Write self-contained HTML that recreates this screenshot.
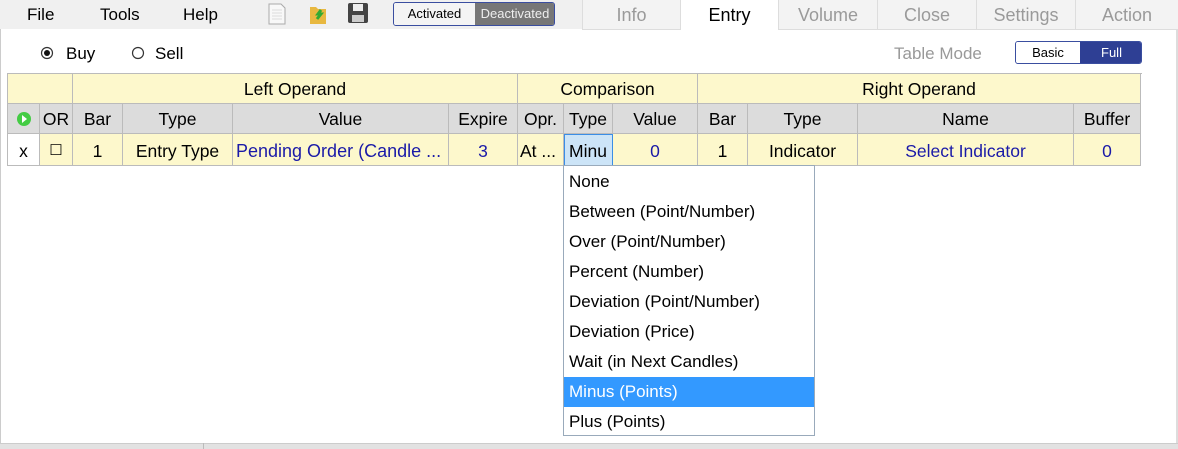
<!DOCTYPE html>
<html><head><meta charset="utf-8"><style>
*{box-sizing:border-box;margin:0;padding:0}
body{width:1178px;height:449px;overflow:hidden;background:#fff;font-family:"Liberation Sans",sans-serif;font-size:17px;color:#000;position:relative}
.a{position:absolute}
.menu{left:0;top:0;width:582px;height:29px;background:#f0f0f0}
.menu span{position:absolute;top:5px;font-size:17px}
.tab{position:absolute;top:0;height:30px;background:#f3f3f3;border-left:1px solid #ddd;border-bottom:1px solid #ddd;color:#9a9a9a;text-align:center;line-height:30px;font-size:18px}
.c{position:absolute;border-right:1px solid #bbb;border-bottom:1px solid #bbb;text-align:center;white-space:nowrap;overflow:hidden;line-height:30px;font-size:17.5px}
.y{background:#fdf8cc}.g{background:#dcdcdc}
.bl{color:#1a1aa8}
.dd div{height:30px;line-height:30px;padding-left:5px}
</style></head><body>
<div class="a menu">
<span style="left:27px">File</span><span style="left:100px">Tools</span><span style="left:183px">Help</span>
<svg class="a" style="left:267px;top:3px" width="20" height="22"><path d="M2 1h12l4 4v16H2z" fill="#f8f8f8" stroke="#aaa"/><path d="M5 7h10M5 10h10M5 13h10M5 16h10" stroke="#ddd"/></svg>
<svg class="a" style="left:308px;top:3px" width="20" height="22"><path d="M2 4h6l2 2h8v15H2z" fill="#e8b840"/><path d="M9 16l4-5h-3l3-4" stroke="#3a3" stroke-width="3" fill="none"/></svg>
<svg class="a" style="left:347px;top:2px" width="22" height="22"><rect x="1" y="1" width="20" height="20" rx="2" fill="#444"/><rect x="6" y="2" width="10" height="7" fill="#eee"/><rect x="5" y="13" width="12" height="7" fill="#ccc"/></svg>
<div class="a" style="left:393px;top:2px;width:162px;height:24px;border:1px solid #3a4ea0;border-radius:3px;overflow:hidden;font-size:13px;line-height:22px">
<span style="position:absolute;left:0;top:0;width:81px;height:22px;background:#f4f4f4;text-align:center;font-size:13px">Activated</span>
<span style="position:absolute;left:81px;top:0;width:80px;height:22px;background:#777;color:#eee;text-align:center;font-size:13px">Deactivated</span></div>
</div>
<div class="tab" style="left:582px;width:98px">Info</div>
<div class="tab" style="left:680px;width:98px;background:#fff;color:#000;border-bottom:none">Entry</div>
<div class="tab" style="left:778px;width:99px">Volume</div>
<div class="tab" style="left:877px;width:99px">Close</div>
<div class="tab" style="left:976px;width:99px">Settings</div>
<div class="tab" style="left:1075px;width:103px">Action</div>
<div class="a" style="left:0;top:29px;width:1px;height:415px;background:#ccc"></div>
<div class="a" style="left:1176px;top:29px;width:2px;height:415px;background:#ddd"></div>
<div class="a" style="left:0;top:443px;width:1178px;height:6px;background:#e2e2e2;border-top:1px solid #ccc"></div>
<div class="a" style="left:203px;top:443px;width:1px;height:6px;background:#bbb"></div>

<svg class="a" style="left:40px;top:46px" width="14" height="14"><circle cx="7" cy="7" r="5.5" fill="none" stroke="#333" stroke-width="1.2"/><circle cx="7" cy="7" r="3" fill="#111"/></svg>
<span class="a" style="left:66px;top:44px">Buy</span>
<svg class="a" style="left:131px;top:46px" width="14" height="14"><circle cx="7" cy="7" r="5.5" fill="none" stroke="#333" stroke-width="1.2"/></svg>
<span class="a" style="left:155px;top:44px">Sell</span>
<span class="a" style="left:894px;top:44px;color:#999">Table Mode</span>
<div class="a" style="left:1015px;top:41px;width:127px;height:23px;border:1px solid #3a4ea0;border-radius:3px;overflow:hidden;font-size:13px;line-height:21px">
<span style="position:absolute;left:0;width:64px;text-align:center;background:#fff">Basic</span>
<span style="position:absolute;left:64px;width:63px;height:21px;text-align:center;background:#2e3f94;color:#fff">Full</span></div>

<div class="a" style="left:7px;top:73px;width:1135px;height:93px;border-left:1px solid #bbb;border-top:1px solid #bbb"></div>
<div class="c y" style="left:8px;top:74px;width:65px;height:30px"></div>
<div class="c y" style="left:73px;top:74px;width:445px;height:30px">Left Operand</div>
<div class="c y" style="left:518px;top:74px;width:180px;height:30px">Comparison</div>
<div class="c y" style="left:698px;top:74px;width:443px;height:30px">Right Operand</div>

<div class="c g" style="left:8px;top:104px;width:32px;height:30px"><svg width="14" height="14" style="margin-top:8px"><circle cx="7" cy="7" r="7" fill="#4c4"/><path d="M5 3l5 4-5 4z" fill="#fff"/></svg></div>
<div class="c g" style="left:40px;top:104px;width:33px;height:30px">OR</div>
<div class="c g" style="left:73px;top:104px;width:50px;height:30px">Bar</div>
<div class="c g" style="left:123px;top:104px;width:110px;height:30px">Type</div>
<div class="c g" style="left:233px;top:104px;width:216px;height:30px">Value</div>
<div class="c g" style="left:449px;top:104px;width:69px;height:30px">Expire</div>
<div class="c g" style="left:518px;top:104px;width:46px;height:30px">Opr.</div>
<div class="c g" style="left:564px;top:104px;width:49px;height:30px">Type</div>
<div class="c g" style="left:613px;top:104px;width:85px;height:30px">Value</div>
<div class="c g" style="left:698px;top:104px;width:50px;height:30px">Bar</div>
<div class="c g" style="left:748px;top:104px;width:110px;height:30px">Type</div>
<div class="c g" style="left:858px;top:104px;width:216px;height:30px">Name</div>
<div class="c g" style="left:1074px;top:104px;width:67px;height:30px">Buffer</div>

<div class="c" style="left:8px;top:134px;width:32px;height:32px;background:#fff;line-height:34px">x</div>
<div class="c y" style="left:40px;top:134px;width:33px;height:32px;font-size:15px;line-height:34px">☐</div>
<div class="c y" style="left:73px;top:134px;width:50px;height:32px;line-height:34px">1</div>
<div class="c y" style="left:123px;top:134px;width:110px;height:32px;line-height:34px">Entry Type</div>
<div class="c y bl" style="left:233px;top:134px;width:216px;height:32px;text-align:left;padding-left:3px;line-height:34px;font-size:18px">Pending Order (Candle ...</div>
<div class="c y bl" style="left:449px;top:134px;width:69px;height:32px;line-height:34px">3</div>
<div class="c y" style="left:518px;top:134px;width:46px;height:32px;text-align:left;padding-left:2px;line-height:34px">At ...</div>
<div class="c" style="left:564px;top:134px;width:49px;height:32px;background:#cce4f7;border:1px solid #3a8ee6;text-align:left;padding-left:4px;line-height:32px">Minu</div>
<div class="c y bl" style="left:613px;top:134px;width:85px;height:32px;line-height:34px">0</div>
<div class="c y" style="left:698px;top:134px;width:50px;height:32px;line-height:34px">1</div>
<div class="c y" style="left:748px;top:134px;width:110px;height:32px;line-height:34px">Indicator</div>
<div class="c y bl" style="left:858px;top:134px;width:216px;height:32px;line-height:34px">Select Indicator</div>
<div class="c y bl" style="left:1074px;top:134px;width:67px;height:32px;line-height:34px">0</div>

<div class="a dd" style="left:563px;top:165px;width:252px;height:271px;background:#fff;border:1px solid #9ab;padding-top:1px">
<div>None</div><div>Between (Point/Number)</div><div>Over (Point/Number)</div><div>Percent (Number)</div><div>Deviation (Point/Number)</div><div>Deviation (Price)</div><div>Wait (in Next Candles)</div><div style="background:#3399ff;color:#fff">Minus (Points)</div><div>Plus (Points)</div>
</div>
</body></html>
